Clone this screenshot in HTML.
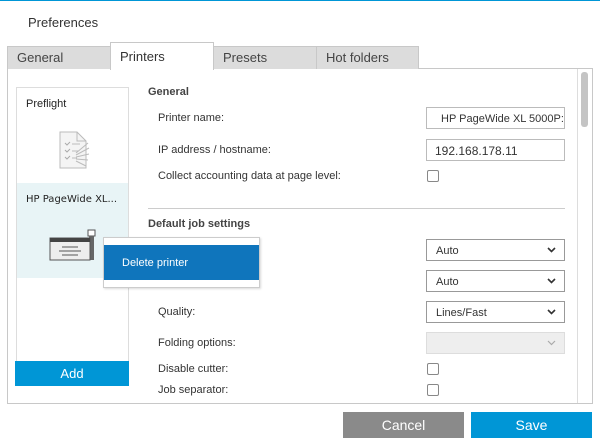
<!DOCTYPE html>
<html><head><style>
*{margin:0;padding:0;box-sizing:border-box}
body{width:600px;height:447px;background:#fff;font-family:"Liberation Sans",sans-serif;font-size:11px;color:#333;position:relative;overflow:hidden}
.a{position:absolute}
.tab{position:absolute;top:46px;height:23px;background:#dcdcdc;border:1px solid #c8c8c8;border-bottom:none;font-size:13px;color:#444;padding:3px 0 0 9px}
.lbl{position:absolute;left:158px;font-size:11px;color:#333}
.inp{position:absolute;left:426px;width:139px;height:22px;border:1px solid #bbb;background:#fff;font-size:12px;padding:4px 0 0 8px;color:#333}
.sel{position:absolute;left:426px;width:139px;height:22px;border:1px solid #999;background:#fff;font-size:11px;padding:5px 0 0 9px}
.sel svg{position:absolute;right:8px;top:7px}
.cb{position:absolute;left:427px;width:12px;height:12px;border:1px solid #888;border-radius:2px;background:#fff}
</style></head><body>
<div class="a" style="left:0;top:0;width:600px;height:1px;background:#0096d6"></div>
<div class="a" style="left:28px;top:15px;font-size:13px;color:#333">Preferences</div>
<div class="a" style="left:7px;top:68px;width:586px;height:336px;border:1px solid #c8c8c8"></div>
<div class="tab" style="left:7px;width:104px">General</div>
<div class="tab" style="left:213px;width:104px">Presets</div>
<div class="tab" style="left:316px;width:103px">Hot folders</div>
<div class="a" style="left:110px;top:42px;width:104px;height:28px;background:#fff;border:1px solid #c8c8c8;border-bottom:none;font-size:13px;padding:6px 0 0 9px;color:#333">Printers</div>
<div class="a" style="left:16px;top:87px;width:113px;height:299px;border:1px solid #ddd"></div>
<div class="a" style="left:26px;top:98px;font-size:11px;color:#222">Preflight</div>
<svg class="a" style="left:58px;top:131px" width="35" height="40" viewBox="0 0 35 40">
<path d="M2 1H19L28 10V37H2Z" fill="#f4f4f4" stroke="#bbb"/><path d="M19 1V10H28" fill="none" stroke="#bbb"/>
<path d="M7 12l2 2 3-3M7 19l2 2 3-3M7 26l2 2 3-3" stroke="#aaa" fill="none"/>
<path d="M14 13h8M14 20h6M14 27h5" stroke="#bbb"/>
<path d="M18 22L30 12M18 24L31 17M18 26L31 23M18 28L30 29M18 30L28 35" stroke="#bbb" fill="none"/>
</svg>
<div class="a" style="left:17px;top:183px;width:111px;height:95px;background:#e8f4f6"></div>
<div class="a" style="left:26px;top:194px;color:#222;font-family:'DejaVu Sans',sans-serif;font-size:10px">HP PageWide XL...</div>
<svg class="a" style="left:49px;top:228px" width="50" height="34" viewBox="0 0 50 34">
<rect x="39" y="2" width="7" height="6" fill="#fff" stroke="#555"/>
<rect x="40" y="8" width="5" height="24" fill="#666"/>
<rect x="1" y="10" width="40" height="22" fill="#eee" stroke="#555"/>
<rect x="1" y="10" width="40" height="4" fill="#444"/>
<path d="M13 19h16M10 23h22M13 27h16" stroke="#555"/>
</svg>
<div class="a" style="left:15px;top:361px;width:114px;height:25px;background:#0096d6;color:#fff;font-size:13px;text-align:center;line-height:25px">Add</div>
<div class="a" style="left:577px;top:69px;width:1px;height:334px;background:#ddd"></div>
<div class="a" style="left:581px;top:72px;width:7px;height:55px;background:#c4c4c4;border-radius:3px"></div>
<div class="a" style="left:148px;top:86px;font-weight:bold;color:#444">General</div>
<div class="lbl" style="top:112px">Printer name:</div>
<div class="inp" style="top:107px;padding-left:14px;font-size:11px;padding-top:5px">HP PageWide XL 5000P:</div>
<div class="lbl" style="top:144px">IP address / hostname:</div>
<div class="inp" style="top:139px">192.168.178.11</div>
<div class="lbl" style="top:170px">Collect accounting data at page level:</div>
<div class="cb" style="top:170px"></div>
<div class="a" style="left:148px;top:208px;width:417px;height:1px;background:#ccc"></div>
<div class="a" style="left:148px;top:218px;font-weight:bold;color:#444">Default job settings</div>
<div class="sel" style="top:239px">Auto<svg width="9" height="6"><path d="M1 1l3.5 3.5L8 1" stroke="#333" stroke-width="1.6" fill="none"/></svg></div>
<div class="sel" style="top:270px">Auto<svg width="9" height="6"><path d="M1 1l3.5 3.5L8 1" stroke="#333" stroke-width="1.6" fill="none"/></svg></div>
<div class="lbl" style="top:306px">Quality:</div>
<div class="sel" style="top:301px">Lines/Fast<svg width="9" height="6"><path d="M1 1l3.5 3.5L8 1" stroke="#333" stroke-width="1.6" fill="none"/></svg></div>
<div class="lbl" style="top:337px">Folding options:</div>
<div class="sel" style="top:332px;background:#eee;border-color:#ddd"><svg width="9" height="6"><path d="M1 1l3.5 3.5L8 1" stroke="#aaa" stroke-width="1.2" fill="none"/></svg></div>
<div class="lbl" style="top:363px">Disable cutter:</div>
<div class="cb" style="top:363px"></div>
<div class="lbl" style="top:384px">Job separator:</div>
<div class="cb" style="top:384px"></div>
<div class="a" style="left:103px;top:237px;width:157px;height:51px;background:#fff;border:1px solid #ccc;box-shadow:1px 1px 2px rgba(0,0,0,.15)"></div>
<div class="a" style="left:104px;top:245px;width:155px;height:35px;background:#0f75bc;color:#fff;font-size:11px;padding:12px 0 0 18px">Delete printer</div>
<div class="a" style="left:343px;top:412px;width:121px;height:26px;background:#8a8a8a;color:#fff;font-size:14px;text-align:center;line-height:26px">Cancel</div>
<div class="a" style="left:471px;top:412px;width:121px;height:26px;background:#0096d6;color:#fff;font-size:14px;text-align:center;line-height:26px">Save</div>
</body></html>
